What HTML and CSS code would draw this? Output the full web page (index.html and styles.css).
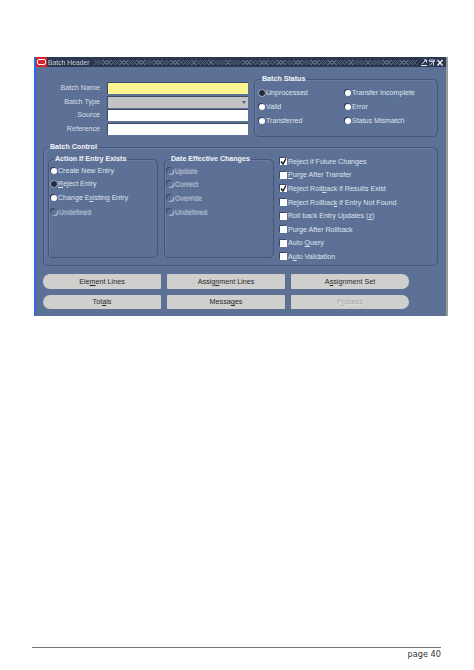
FILE: index.html
```html
<!DOCTYPE html>
<html lang="en">
<head>
<meta charset="utf-8">
<title>Batch Header</title>
<link rel="stylesheet" href="styles.css">
</head>
<body>
<main class="page">
  <section class="window">
    <header class="titlebar">
      <span class="logo"></span>
      <span class="title">Batch Header</span>
      <span class="stripes"></span>
      <span class="winbtns">
        <svg width="6" height="7" viewBox="0 0 6 7"><path d="M0 6.500h6M1 5l4-4M3 1h2.500v2.500" fill="none" stroke="#e8ecf2" stroke-width="1"/></svg>
        <svg width="6" height="7" viewBox="0 0 6 7"><path d="M.5 1h5v1.500h-5zM4.500 2.500v4M1 6.500l2.500-3" fill="none" stroke="#c8d0dc" stroke-width="1"/></svg>
        <svg width="6" height="7" viewBox="0 0 6 7"><path d="M.5 1l5 5.500M5.500 1l-5 5.500" fill="none" stroke="#f0f3f7" stroke-width="1.400"/></svg>
      </span>
    </header>
    <div class="content">
      <div class="top">
        <div class="form">
          <label class="lbl">Batch Name</label><div class="field required"></div>
          <label class="lbl">Batch Type</label><div class="field select"><span class="arrow"></span></div>
          <label class="lbl">Source</label><div class="field"></div>
          <label class="lbl">Reference</label><div class="field"></div>
        </div>
        <fieldset class="group status">
          <legend>Batch Status</legend>
          <div class="status-grid">
            <div class="opt"><span class="radio on"></span>Unprocessed</div>
            <div class="opt"><span class="radio"></span>Transfer Incomplete</div>
            <div class="opt"><span class="radio"></span>Valid</div>
            <div class="opt"><span class="radio"></span>Error</div>
            <div class="opt"><span class="radio"></span>Transferred</div>
            <div class="opt"><span class="radio"></span>Status Mismatch</div>
          </div>
        </fieldset>
      </div>
      <fieldset class="group control">
        <legend>Batch Control</legend>
        <div class="control-row">
          <fieldset class="group sub">
            <legend>Action If Entry Exists</legend>
            <div class="opt"><span class="radio"></span>Create New Entry</div>
            <div class="opt"><span class="radio on"></span><span><u>R</u>eject Entry</span></div>
            <div class="opt"><span class="radio"></span><span>Change E<u>x</u>isting Entry</span></div>
            <div class="opt off"><span class="radio"></span>Undefined</div>
          </fieldset>
          <fieldset class="group sub">
            <legend>Date Effective Changes</legend>
            <div class="opt off"><span class="radio"></span>Update</div>
            <div class="opt off"><span class="radio"></span>Correct</div>
            <div class="opt off"><span class="radio"></span>Override</div>
            <div class="opt off"><span class="radio"></span>Undefined</div>
          </fieldset>
          <div class="checks">
            <div class="opt"><span class="check on"><svg viewBox="0 0 7 7"><path d="M1 3.500l2 2.500 3-5.500" fill="none" stroke="#111" stroke-width="1.400"/></svg></span>Reject if Future Changes</div>
            <div class="opt"><span class="check"></span><span><u>P</u>urge After Transfer</span></div>
            <div class="opt"><span class="check on"><svg viewBox="0 0 7 7"><path d="M1 3.500l2 2.500 3-5.500" fill="none" stroke="#111" stroke-width="1.400"/></svg></span><span>Reject Roll<u>b</u>ack if Results Exist</span></div>
            <div class="opt"><span class="check"></span><span>Reject Rollbac<u>k</u> if Entry Not Found</span></div>
            <div class="opt"><span class="check"></span><span>Roll back Entry Updates (<u>z</u>)</span></div>
            <div class="opt"><span class="check"></span>Purge After Rollback</div>
            <div class="opt"><span class="check"></span><span>Auto <u>Q</u>uery</span></div>
            <div class="opt"><span class="check"></span><span>A<u>u</u>to Validation</span></div>
          </div>
        </div>
      </fieldset>
      <div class="buttons">
        <button class="btn first">Ele<u>m</u>ent Lines</button>
        <button class="btn">Assig<u>n</u>ment Lines</button>
        <button class="btn last">A<u>s</u>signment Set</button>
        <button class="btn first">Tot<u>a</u>ls</button>
        <button class="btn">Messa<u>g</u>es</button>
        <button class="btn last disabled">P<u>r</u>ocess</button>
      </div>
    </div>
  </section>
  <footer class="footer">page 40</footer>
</main>
</body>
</html>
```

FILE: styles.css
```css
* { box-sizing: border-box; }
html, body { margin: 0; padding: 0; background: #fff; }
.page {
  width: 474px;
  height: 670px;
  display: flex;
  flex-direction: column;
  padding: 57px 33px 10px 33px;
  font-family: "Liberation Sans", Arial, sans-serif;
}
.window {
  width: 414px;
  margin-left: 1px;
  height: 259px;
  background: #5d7196;
  border-left: 2px solid #2f6be0;
  border-right: 2px solid #9a9a98;
  display: flex;
  flex-direction: column;
}
.titlebar {
  height: 10px;
  flex: none;
  display: flex;
  align-items: center;
  background: #2c3850;
  color: #dfe4ec;
  font-size: 6.800px;
  padding-right: 3px;
}
.logo {
  width: 11px;
  height: 10px;
  background: #d8222a;
  flex: none;
  display: flex;
  align-items: center;
  justify-content: center;
}
.logo::after {
  content: "";
  width: 7px;
  height: 4px;
  border: 1px solid #fff;
  border-radius: 2px;
}
.title { margin-left: 1px; white-space: nowrap; opacity: .85; }
.stripes {
  flex: 1;
  height: 5px;
  margin: 0 4px;
  background-image:
    repeating-linear-gradient(135deg, #56657f 0 1px, transparent 1px 3px),
    repeating-linear-gradient(45deg, #56657f 0 1px, transparent 1px 3px);
}
.winbtns { display: flex; gap: 2px; align-items: center; flex: none; }
.content {
  flex: 1;
  padding: 8px 8px 0 7px;
  color: #dfe4ec;
  font-size: 7px;
}
.top { display: flex; gap: 6px; height: 62px; }
.form {
  width: 205px;
  padding-top: 7px;
  display: grid;
  grid-template-columns: 57px 141px;
  column-gap: 7px;
  grid-auto-rows: 12px;
  row-gap: 1.700px;
}
.lbl { text-align: right; font-size: 7.200px; line-height: 12px; color: #d8dee8; }
.field {
  background: #fff;
  border-top: 1px solid #3a4a68;
  border-left: 1px solid #3a4a68;
  position: relative;
}
.required { background: #fbf58f; }
.select { background: #c3c3c3; }
.arrow {
  position: absolute;
  right: 2px;
  top: 4px;
  border: 2px solid transparent;
  border-top: 3px solid #55606e;
  border-bottom: 0;
}
.group {
  margin: 0;
  padding: 0;
  border: 1px solid #42567a;
  border-radius: 5px;
  min-width: 0;
  box-shadow: 1px 1px 0 #6a7da0 inset;
}
.group legend {
  font-weight: bold;
  font-size: 7.100px;
  line-height: 9px;
  padding: 0 1px;
  margin-left: 2px;
  color: #f0f3f7;
}
.status { flex: 1; padding: 2px 0 0 4px; }
.status-grid {
  display: grid;
  grid-template-columns: 86px 1fr;
  grid-auto-rows: 14px;
}
.opt {
  display: flex;
  align-items: center;
  height: 13.600px;
  white-space: nowrap;
  font-size: 7.100px;
}
.radio {
  width: 6px;
  height: 6px;
  margin-right: 1px;
  border-radius: 50%;
  background: #fff;
  box-shadow: -1px -1px 0 #2f3d58;
  flex: none;
}
.radio.on { background: #20283a; box-shadow: 0 0 0 .5px #d8dee8; }
.off { color: #8d9db8; text-shadow: 1px 1px 0 #c0cada; }
.off .radio { background: #5d7196; box-shadow: -1px -1px 0 #38475f, 1px 1px 0 #b5c0d2; }
.control { margin-top: 6px; height: 123px; padding: 3px 0 0 4px; }
.control > legend { margin-left: 1px; }
.control-row { display: flex; gap: 6px; }
.sub { width: 110px; height: 103px; padding: 0 0 0 2px; }
.sub legend { margin-left: 3px; line-height: 9px; }
.check {
  width: 7px;
  height: 7px;
  margin-right: 1px;
  background: #fff;
  box-shadow: -1px -1px 0 #3a4a68;
  flex: none;
}
.check svg { display: block; width: 7px; height: 7px; }
.buttons {
  margin-top: 8px;
  width: 366px;
  display: grid;
  grid-template-columns: repeat(3, 118px);
  grid-auto-rows: 14.500px;
  gap: 6px;
}
.btn {
  border: 0;
  padding: 0;
  background: #cfcfcd;
  color: #2a2a2a;
  font: 7.200px "Liberation Sans", Arial, sans-serif;
  border-radius: 1px;
}
.first { border-radius: 7px 1px 1px 7px; }
.last { border-radius: 1px 7px 7px 1px; }
.disabled { color: #a5a5a5; text-shadow: 1px 1px 0 #e4e4e4; }
.footer {
  margin-top: auto;
  width: 409px;
  margin-left: -1px;
  border-top: 1px solid #777;
  text-align: right;
  font: 8.200px/12px "DejaVu Sans", sans-serif;
  color: #333;
}
```
